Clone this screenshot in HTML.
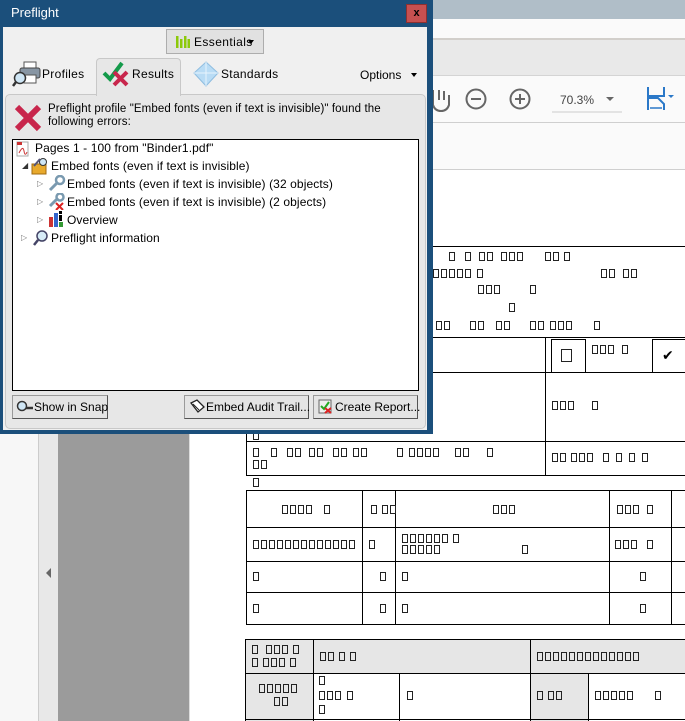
<!DOCTYPE html>
<html><head><meta charset="utf-8"><style>
*{margin:0;padding:0;box-sizing:border-box}
body{width:685px;height:721px;overflow:hidden;position:relative;background:#fff;font-family:"Liberation Sans","DejaVu Sans",sans-serif;font-size:12px;color:#000}
.a{position:absolute}
.t{display:inline-block;width:6px;height:9px;border:1px solid #222;margin-right:2px;vertical-align:middle}
.tx{position:absolute;font-size:0;white-space:nowrap}
.hl{position:absolute;height:1px;background:#000}
.vl{position:absolute;width:1px;background:#000}
.btn{position:absolute;height:24px;background:#e4e4e4;border:1px solid #9a9a9a;border-right-color:#555;border-bottom-color:#555;font-size:12px;line-height:22px;padding-left:3px;white-space:nowrap}
.row{position:absolute;font-size:12px;white-space:nowrap;line-height:16px;letter-spacing:0.1px}
.tri{position:absolute;font-size:8px;color:#777}
</style></head><body>
<div class="a" style="left:0;top:0;width:685px;height:19px;background:#b0bec8"></div>
<div class="a" style="left:0;top:19px;width:685px;height:19px;background:#fafafa"></div>
<div class="a" style="left:0;top:38px;width:685px;height:2px;background:#d2cfcb"></div>
<div class="a" style="left:0;top:40px;width:685px;height:35px;background:#e9e9e9"></div>
<div class="a" style="left:0;top:75px;width:685px;height:1px;background:#d4d4d4"></div>
<div class="a" style="left:0;top:76px;width:685px;height:46px;background:#fafafa"></div>
<div class="a" style="left:0;top:122px;width:685px;height:1px;background:#cfcfcf"></div>
<div class="a" style="left:0;top:123px;width:685px;height:46px;background:#fafafa"></div>
<div class="a" style="left:0;top:169px;width:685px;height:1px;background:#cfcfcf"></div>
<svg class="a" style="left:430px;top:86px" width="250" height="28" viewBox="0 0 250 28">
<path d="M3 4v15q2 6 8 6t8-6v-10M9 4v10M14 5v9" fill="none" stroke="#666" stroke-width="2"/>
<circle cx="46" cy="13" r="9.5" fill="none" stroke="#666" stroke-width="2"/><path d="M41 13h10" stroke="#666" stroke-width="2"/>
<circle cx="90" cy="13" r="9.5" fill="none" stroke="#666" stroke-width="2"/><path d="M85 13h10M90 8v10" stroke="#666" stroke-width="2"/>
<text x="130" y="18" font-family="Liberation Sans" font-size="12" fill="#444">70.3%</text>
<path d="M176 11l4 4 4-4z" fill="#666"/>
<path d="M122 26h70" stroke="#ccc" stroke-width="1"/>
<path d="M218 1v9h16v-9M218 24v-12h10l6 6v6" fill="none" stroke="#2a78c8" stroke-width="2"/>
<path d="M220 22h12" stroke="#2a78c8" stroke-width="1.5"/>
<path d="M238 9l3 3 3-3z" fill="#2a78c8"/>
</svg>
<div class="a" style="left:0;top:170px;width:38px;height:551px;background:#f7f7f7"></div>
<div class="a" style="left:38px;top:170px;width:20px;height:551px;background:#e8e8e8;border-left:1px solid #ccc"></div>
<div class="a" style="left:46px;top:568px;width:0;height:0;border-top:5px solid transparent;border-bottom:5px solid transparent;border-right:5px solid #666"></div>
<div class="a" style="left:58px;top:170px;width:131px;height:551px;background:#9b9b9b"></div>
<div class="a" style="left:189px;top:170px;width:1px;height:551px;background:#ddd"></div>
<div class="hl" style="left:430px;top:246px;width:255px"></div>
<div class="tx" style="left:449px;top:252px"><i class="t"></i><i class="t" style="margin-left:8px"></i><i class="t" style="margin-left:6px"></i><i class="t"></i><i class="t" style="margin-left:6px"></i><i class="t"></i><i class="t"></i><i class="t" style="margin-left:20px"></i><i class="t"></i><i class="t" style="margin-left:3px"></i></div>
<div class="tx" style="left:433px;top:269px"><i class="t"></i><i class="t"></i><i class="t"></i><i class="t"></i><i class="t"></i><i class="t" style="margin-left:4px"></i><i class="t" style="margin-left:116px"></i><i class="t"></i><i class="t" style="margin-left:6px"></i><i class="t"></i></div>
<div class="tx" style="left:478px;top:285px"><i class="t"></i><i class="t"></i><i class="t"></i><i class="t" style="margin-left:28px"></i></div>
<div class="tx" style="left:509px;top:303px"><i class="t"></i></div>
<div class="tx" style="left:436px;top:321px"><i class="t"></i><i class="t"></i><i class="t" style="margin-left:18px"></i><i class="t"></i><i class="t" style="margin-left:10px"></i><i class="t"></i><i class="t" style="margin-left:18px"></i><i class="t"></i><i class="t" style="margin-left:4px"></i><i class="t"></i><i class="t"></i><i class="t" style="margin-left:20px"></i></div>
<div class="hl" style="left:246px;top:337px;width:439px"></div>
<div class="hl" style="left:246px;top:372px;width:439px"></div>
<div class="hl" style="left:246px;top:441px;width:439px"></div>
<div class="hl" style="left:246px;top:475px;width:439px"></div>
<div class="vl" style="left:246px;top:337px;height:139px"></div>
<div class="vl" style="left:545px;top:337px;height:139px"></div>
<div class="a" style="left:551px;top:339px;width:35px;height:33px;border:1px solid #000;border-bottom:none"></div>
<div class="a" style="left:561px;top:349px;width:11px;height:13px;border:1px solid #222"></div>
<div class="tx" style="left:592px;top:345px"><i class="t"></i><i class="t"></i><i class="t"></i><i class="t" style="margin-left:6px"></i></div>
<div class="a" style="left:652px;top:339px;width:40px;height:33px;border:1px solid #000;border-bottom:none"></div>
<div class="a" style="left:662px;top:347px;font-size:14px">✔</div>
<div class="tx" style="left:552px;top:401px"><i class="t"></i><i class="t"></i><i class="t"></i><i class="t" style="margin-left:16px"></i></div>
<div class="tx" style="left:253px;top:431px"><i class="t"></i></div>
<div class="tx" style="left:253px;top:448px"><i class="t"></i><i class="t" style="margin-left:10px"></i><i class="t" style="margin-left:8px"></i><i class="t"></i><i class="t" style="margin-left:6px"></i><i class="t"></i><i class="t" style="margin-left:8px"></i><i class="t"></i><i class="t" style="margin-left:4px"></i><i class="t"></i><i class="t" style="margin-left:28px"></i><i class="t" style="margin-left:4px"></i><i class="t"></i><i class="t"></i><i class="t"></i><i class="t" style="margin-left:14px"></i><i class="t"></i><i class="t" style="margin-left:16px"></i></div>
<div class="tx" style="left:253px;top:460px"><i class="t"></i><i class="t"></i></div>
<div class="tx" style="left:552px;top:453px"><i class="t"></i><i class="t"></i><i class="t" style="margin-left:3px"></i><i class="t"></i><i class="t"></i><i class="t" style="margin-left:8px"></i><i class="t" style="margin-left:5px"></i><i class="t" style="margin-left:5px"></i><i class="t" style="margin-left:5px"></i></div>
<div class="tx" style="left:253px;top:478px"><i class="t"></i></div>
<div class="hl" style="left:246px;top:490px;width:439px"></div>
<div class="hl" style="left:246px;top:527px;width:439px"></div>
<div class="hl" style="left:246px;top:561px;width:439px"></div>
<div class="hl" style="left:246px;top:592px;width:439px"></div>
<div class="hl" style="left:246px;top:624px;width:439px"></div>
<div class="vl" style="left:246px;top:490px;height:135px"></div>
<div class="vl" style="left:362px;top:490px;height:135px"></div>
<div class="vl" style="left:395px;top:490px;height:135px"></div>
<div class="vl" style="left:609px;top:490px;height:135px"></div>
<div class="vl" style="left:671px;top:490px;height:135px"></div>
<div class="tx" style="left:282px;top:505px"><i class="t"></i><i class="t"></i><i class="t"></i><i class="t"></i><i class="t" style="margin-left:10px"></i></div>
<div class="tx" style="left:371px;top:505px"><i class="t"></i><i class="t" style="margin-left:3px"></i><i class="t"></i></div>
<div class="tx" style="left:493px;top:505px"><i class="t"></i><i class="t"></i><i class="t"></i></div>
<div class="tx" style="left:617px;top:505px"><i class="t"></i><i class="t"></i><i class="t"></i><i class="t" style="margin-left:6px"></i></div>
<div class="tx" style="left:253px;top:540px"><i class="t"></i><i class="t"></i><i class="t"></i><i class="t"></i><i class="t"></i><i class="t"></i><i class="t"></i><i class="t"></i><i class="t"></i><i class="t"></i><i class="t"></i><i class="t"></i><i class="t"></i></div>
<div class="tx" style="left:369px;top:540px"><i class="t"></i></div>
<div class="tx" style="left:402px;top:534px"><i class="t"></i><i class="t"></i><i class="t"></i><i class="t"></i><i class="t"></i><i class="t"></i><i class="t" style="margin-left:3px"></i></div>
<div class="tx" style="left:402px;top:545px"><i class="t"></i><i class="t"></i><i class="t"></i><i class="t"></i><i class="t"></i><i class="t" style="margin-left:80px"></i></div>
<div class="tx" style="left:615px;top:540px"><i class="t"></i><i class="t"></i><i class="t"></i><i class="t" style="margin-left:8px"></i></div>
<div class="tx" style="left:253px;top:572px"><i class="t"></i></div>
<div class="tx" style="left:380px;top:572px"><i class="t"></i></div>
<div class="tx" style="left:402px;top:572px"><i class="t"></i></div>
<div class="tx" style="left:640px;top:572px"><i class="t"></i></div>
<div class="tx" style="left:253px;top:604px"><i class="t"></i></div>
<div class="tx" style="left:380px;top:604px"><i class="t"></i></div>
<div class="tx" style="left:402px;top:604px"><i class="t"></i></div>
<div class="tx" style="left:640px;top:604px"><i class="t"></i></div>
<div class="a" style="left:245px;top:639px;width:440px;height:34px;background:#e6e6e6"></div>
<div class="a" style="left:245px;top:673px;width:68px;height:48px;background:#e6e6e6"></div>
<div class="a" style="left:530px;top:673px;width:58px;height:48px;background:#e6e6e6"></div>
<div class="hl" style="left:245px;top:639px;width:440px"></div>
<div class="hl" style="left:245px;top:673px;width:440px"></div>
<div class="hl" style="left:245px;top:719px;width:440px"></div>
<div class="vl" style="left:245px;top:639px;height:82px"></div>
<div class="vl" style="left:313px;top:639px;height:82px"></div>
<div class="vl" style="left:530px;top:639px;height:82px"></div>
<div class="vl" style="left:399px;top:673px;height:48px"></div>
<div class="vl" style="left:588px;top:673px;height:48px"></div>
<div class="tx" style="left:252px;top:645px"><i class="t"></i><i class="t" style="margin-left:6px"></i><i class="t"></i><i class="t"></i><i class="t" style="margin-left:3px"></i></div>
<div class="tx" style="left:252px;top:658px"><i class="t"></i><i class="t" style="margin-left:3px"></i><i class="t"></i><i class="t"></i><i class="t" style="margin-left:3px"></i></div>
<div class="tx" style="left:320px;top:652px"><i class="t"></i><i class="t"></i><i class="t" style="margin-left:3px"></i><i class="t" style="margin-left:3px"></i></div>
<div class="tx" style="left:537px;top:652px"><i class="t"></i><i class="t"></i><i class="t"></i><i class="t"></i><i class="t"></i><i class="t"></i><i class="t"></i><i class="t"></i><i class="t"></i><i class="t"></i><i class="t"></i><i class="t"></i><i class="t"></i></div>
<div class="tx" style="left:259px;top:684px"><i class="t"></i><i class="t"></i><i class="t"></i><i class="t"></i><i class="t"></i></div>
<div class="tx" style="left:274px;top:697px"><i class="t"></i><i class="t"></i></div>
<div class="tx" style="left:319px;top:676px"><i class="t"></i></div>
<div class="tx" style="left:319px;top:691px"><i class="t"></i><i class="t"></i><i class="t"></i><i class="t" style="margin-left:4px"></i></div>
<div class="tx" style="left:319px;top:705px"><i class="t"></i></div>
<div class="tx" style="left:407px;top:691px"><i class="t"></i></div>
<div class="tx" style="left:537px;top:691px"><i class="t"></i><i class="t" style="margin-left:3px"></i><i class="t"></i></div>
<div class="tx" style="left:595px;top:691px"><i class="t"></i><i class="t"></i><i class="t"></i><i class="t"></i><i class="t"></i><i class="t" style="margin-left:20px"></i></div>

<div class="a" style="left:0;top:0;width:433px;height:434px;background:#1b4f7b"></div>
<div class="a" style="left:11px;top:4px;color:#fff;font-size:13px;line-height:18px">Preflight</div>
<div class="a" style="left:406px;top:4px;width:21px;height:19px;background:#c75050;border:1px solid #8d3030;color:#000;font-size:11px;text-align:center;line-height:16px;font-weight:bold">x</div>
<div class="a" style="left:3px;top:27px;width:424px;height:403px;background:#f0f0f0"></div>
<div class="a" style="left:166px;top:29px;width:98px;height:25px;background:#e1e1e1;border:1px solid #adadad"></div>
<svg class="a" style="left:176px;top:35px" width="14" height="14"><g fill="#8cc90a"><rect x="0" y="1" width="2.5" height="12"/><rect x="4" y="4" width="2.5" height="9"/><rect x="8" y="1" width="2.5" height="12"/><rect x="11.5" y="4" width="2.5" height="9"/></g></svg>
<div class="a" style="left:194px;top:35px;font-size:12px;letter-spacing:0.4px">Essentials</div>
<div class="a" style="left:248px;top:40px;border-left:3px solid transparent;border-right:3px solid transparent;border-top:4px solid #000"></div>
<div class="a" style="left:5px;top:94px;width:421px;height:335px;background:#e7e7e7;border:1px solid #c8c8c8;border-radius:5px"></div>
<div class="a" style="left:96px;top:58px;width:85px;height:38px;background:#e7e7e7;border:1px solid #c8c8c8;border-bottom:none;border-radius:4px 4px 0 0"></div>
<svg class="a" style="left:12px;top:60px" width="30" height="28" viewBox="0 0 30 28">
<rect x="12" y="2" width="12" height="7" fill="#fff" stroke="#555"/>
<rect x="8" y="8" width="20" height="10" rx="2" fill="#8896a4" stroke="#444"/>
<rect x="12" y="15" width="12" height="8" fill="#fff" stroke="#555"/>
<circle cx="8" cy="18" r="5.5" fill="#cfe6f5" stroke="#333" stroke-width="1.5"/>
<path d="M4 22l-3 4" stroke="#333" stroke-width="2.5"/>
</svg>
<div class="a" style="left:42px;top:67px;font-size:12px;letter-spacing:0.3px">Profiles</div>
<svg class="a" style="left:102px;top:61px" width="28" height="26" viewBox="0 0 28 26">
<path d="M2 12l6 6L20 2" fill="none" stroke="#149a4a" stroke-width="4"/>
<path d="M12 11l13 13M25 11L12 24" stroke="#c8264c" stroke-width="4"/>
</svg>
<div class="a" style="left:132px;top:67px;font-size:12px;letter-spacing:0.3px">Results</div>
<svg class="a" style="left:193px;top:61px" width="26" height="26" viewBox="0 0 26 26">
<path d="M13 1L25 12 13 25 1 12z" fill="#b9dcf5" stroke="#8fbde0"/>
<path d="M1 12h24M13 1v24" stroke="#e8f4fd" stroke-width="1"/>
</svg>
<div class="a" style="left:221px;top:67px;font-size:12px;letter-spacing:0.3px">Standards</div>
<div class="a" style="left:360px;top:68px;font-size:12px">Options</div>
<div class="a" style="left:411px;top:73px;border-left:3px solid transparent;border-right:3px solid transparent;border-top:4px solid #000"></div>
<svg class="a" style="left:14px;top:104px" width="28" height="28" viewBox="0 0 28 28"><path d="M3 3l22 22M25 3L3 25" stroke="#c8264c" stroke-width="6"/></svg>
<div class="a" style="left:48px;top:103px;font-size:11.5px;line-height:13px;letter-spacing:0.1px">Preflight profile "Embed fonts (even if text is invisible)" found the<br>following errors:</div>
<div class="a" style="left:12px;top:139px;width:407px;height:252px;background:#fff;border:1px solid #000"></div>
<svg class="a" style="left:16px;top:141px" width="14" height="16"><rect x="1" y="1" width="11" height="14" fill="#fff" stroke="#aaa"/><rect x="1" y="1" width="5" height="3" fill="#c33"/><path d="M3 12q4-8 5-2t3 1" fill="none" stroke="#c33"/></svg>
<div class="row" style="left:35px;top:140px">Pages 1 - 100 from "Binder1.pdf"</div>
<div class="tri" style="left:22px;top:161px;color:#333">◢</div>
<svg class="a" style="left:31px;top:157px" width="18" height="18"><rect x="1" y="7" width="14" height="10" fill="#e8a92c" stroke="#a06a10"/><circle cx="12" cy="5" r="3.5" fill="#cfe6f5" stroke="#333"/><path d="M3 9l6-7" stroke="#557" stroke-width="2"/></svg>
<div class="row" style="left:51px;top:158px">Embed fonts (even if text is invisible)</div>
<div class="tri" style="left:37px;top:179px">▷</div>
<svg class="a" style="left:48px;top:175px" width="18" height="17"><path d="M2 15L10 7" stroke="#7a9ab0" stroke-width="3"/><circle cx="12" cy="5" r="4" fill="none" stroke="#7a9ab0" stroke-width="2.5"/></svg>
<div class="row" style="left:67px;top:176px">Embed fonts (even if text is invisible) (32 objects)</div>
<div class="tri" style="left:37px;top:197px">▷</div>
<svg class="a" style="left:48px;top:193px" width="18" height="17"><path d="M2 13L10 5" stroke="#7a9ab0" stroke-width="3"/><circle cx="12" cy="4" r="3.5" fill="none" stroke="#7a9ab0" stroke-width="2.5"/><path d="M8 10l7 7M15 10l-7 7" stroke="#d22" stroke-width="2"/></svg>
<div class="row" style="left:67px;top:194px">Embed fonts (even if text is invisible) (2 objects)</div>
<div class="tri" style="left:37px;top:215px">▷</div>
<svg class="a" style="left:49px;top:211px" width="16" height="17"><rect x="0" y="6" width="4" height="10" fill="#c33"/><rect x="5" y="2" width="4" height="14" fill="#36c"/><rect x="10" y="0" width="3" height="3" fill="#000"/><rect x="10" y="4" width="3" height="6" fill="#000"/><rect x="10" y="11" width="4" height="5" fill="#393"/></svg>
<div class="row" style="left:67px;top:212px">Overview</div>
<div class="tri" style="left:21px;top:233px">▷</div>
<svg class="a" style="left:32px;top:229px" width="17" height="17"><circle cx="10" cy="7" r="5" fill="#d7ecf7" stroke="#446" stroke-width="1.5"/><path d="M6 11l-4 5" stroke="#446" stroke-width="2.5"/></svg>
<div class="row" style="left:51px;top:230px">Preflight information</div>
<div class="btn" style="left:12px;top:395px;width:96px"><svg width="18" height="12" style="vertical-align:-1px"><circle cx="6" cy="6" r="4.5" fill="#cfe6f5" stroke="#333" stroke-width="1.5"/><path d="M10 8h7" stroke="#333" stroke-width="2.5"/></svg>Show in Snap</div>
<div class="btn" style="left:184px;top:395px;width:125px"><svg width="18" height="14" style="vertical-align:-2px"><path d="M3 4l7 9 6-5-7-7z" fill="#fff" stroke="#222" stroke-width="1.3"/><path d="M5 5l6 6" stroke="#222"/></svg>Embed Audit Trail...</div>
<div class="btn" style="left:313px;top:395px;width:105px"><svg width="18" height="16" style="vertical-align:-3px"><rect x="2" y="2" width="12" height="13" fill="#eee" stroke="#666"/><path d="M4 8l3 3 5-7" fill="none" stroke="#2a2" stroke-width="2"/><path d="M8 10l6 5M14 10l-6 5" stroke="#d22" stroke-width="2"/></svg>Create Report...</div>
</body></html>
